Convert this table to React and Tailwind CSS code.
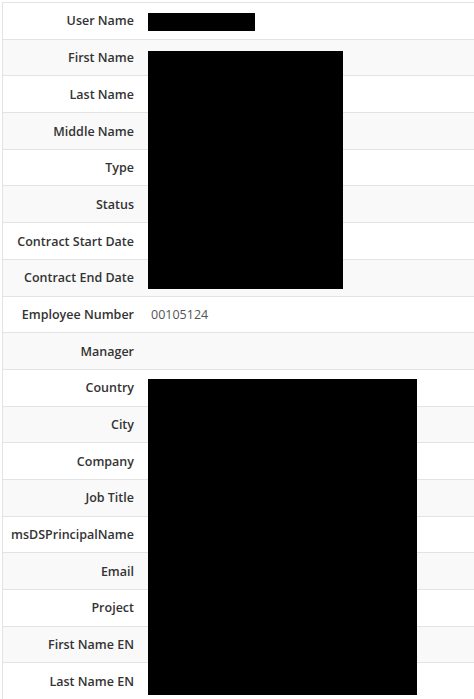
import React from "react";

const rows = [
  "User Name",
  "First Name",
  "Last Name",
  "Middle Name",
  "Type",
  "Status",
  "Contract Start Date",
  "Contract End Date",
  "Employee Number",
  "Manager",
  "Country",
  "City",
  "Company",
  "Job Title",
  "msDSPrincipalName",
  "Email",
  "Project",
  "First Name EN",
  "Last Name EN",
];

export default function App() {
  return (
    <div className="w-[474px] h-[699px] overflow-hidden bg-white pt-[2px] pl-[2px]" style={{ fontFamily: '"Open Sans", "Noto Sans", sans-serif' }}>
      <div className="relative border-l border-[#e3e3e3]">
        {rows.map((label, i) => (
          <div
            key={label}
            className={`flex h-[36.7px] border-t border-[#e3e3e3] pt-[2px] ${i % 2 === 1 ? "bg-[#f9f9f9]" : "bg-white"}`}
          >
            <div className="w-[140px] shrink-0 flex items-center justify-end pr-[9px] text-[12.5px] font-semibold text-[#333]">
              {label}
            </div>
            <div className="flex-1 flex items-center pl-[8px] text-[12.5px] text-[#555]">
              {label === "Employee Number" ? "00105124" : ""}
            </div>
          </div>
        ))}
        <div className="absolute left-[145px] top-[11px] w-[107px] h-[18px] bg-black" />
        <div className="absolute left-[145px] top-[49px] w-[195px] h-[238px] bg-black" />
        <div className="absolute left-[145px] top-[377px] w-[269px] h-[316px] bg-black" />
      </div>
    </div>
  );
}
